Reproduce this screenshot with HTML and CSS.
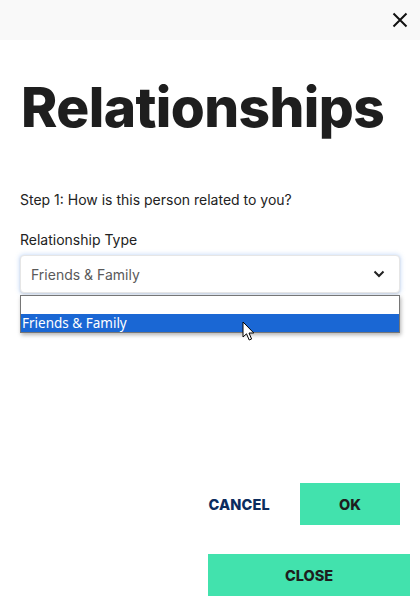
FILE: index.html
```html
<!DOCTYPE html>
<html>
<head>
<meta charset="utf-8">
<link rel="stylesheet" href="styles.css">
</head>
<body>
<div class="page">
  <header class="topbar">
    <button class="close-x" aria-label="Close">
      <svg width="16" height="16" viewBox="0 0 16 16"><path d="M1.5 1.5 L14.5 14.5 M14.5 1.5 L1.5 14.5" stroke="#111" stroke-width="2" fill="none"/></svg>
    </button>
  </header>
  <main class="content">
    <h1 class="title">Relationships</h1>
    <p class="step">Step 1: How is this person related to you?</p>
    <label class="label">Relationship Type</label>
    <div class="select-wrap">
      <div class="select">
        <span class="select-value">Friends &amp; Family</span>
        <svg class="chev" width="12" height="8" viewBox="0 0 12 8"><path d="M1.5 1.5 L6 6 L10.5 1.5" stroke="#222" stroke-width="2" fill="none"/></svg>
      </div>
      <div class="listbox">
        <div class="opt"></div>
        <div class="opt sel">Friends &amp; Family</div>
      </div>
      <svg class="cursor" width="14" height="21" viewBox="0 0 14 21"><path d="M1 1 L1 16 L4.5 12.8 L7.2 19 L9.6 18 L7 12 L11.8 12 Z" fill="#fff" stroke="#000" stroke-width="1"/></svg>
    </div>
  </main>
  <footer class="footer">
    <div class="actions">
      <button class="btn-text">CANCEL</button>
      <button class="btn-primary ok">OK</button>
    </div>
    <div class="close-row">
      <button class="btn-primary close">CLOSE</button>
    </div>
  </footer>
</div>
</body>
</html>
```
FILE: styles.css
```css
* { box-sizing: border-box; }
html, body { margin: 0; padding: 0; background: #fff; }
body { font-family: Inter, "Noto Sans", sans-serif; color: #1e1e1e; width: 420px; height: 606px; overflow: hidden; }
.page { display: flex; flex-direction: column; height: 606px; }
.topbar { height: 40px; background: #f9f9f9; display: flex; justify-content: flex-end; align-items: center; padding-right: 12px; }
.close-x { border: 0; background: transparent; padding: 0; width: 16px; height: 16px; display: flex; }
.content { padding: 0 20px; }
.title { font-size: 55px; line-height: 66px; font-weight: 800; margin: 34px 0 0 1px; letter-spacing: -0.6px; color: #1e1e1e; }
.step { font-size: 14px; line-height: 20px; margin: 50px 0 0; color: #222; }
.label { display: block; font-size: 14px; line-height: 20px; margin-top: 20px; color: #222; }
.select-wrap { position: relative; margin-top: 5px; }
.select { height: 38px; border: 1px solid #e6e6e6; border-radius: 4px; background: #fff; display: flex; align-items: center; justify-content: space-between; padding: 0 14px 0 10px; box-shadow: 0 0 4px 1px rgba(120,170,240,0.35), 0 1px 2px rgba(0,0,0,0.12); }
.select-value { font-size: 14px; color: #5a5a5a; }
.chev { display: block; margin-top: -1px; }
.listbox { position: absolute; left: 0; top: 40px; width: 380px; border: 1px solid #767676; background: #fff; box-shadow: 1px 2px 4px rgba(0,0,0,0.3); }
.opt { height: 18px; font-family: "Noto Sans", "Open Sans", sans-serif; font-size: 13.5px; line-height: 18px; padding-left: 1px; color: #000; }
.opt.sel { background: #1a67d4; color: #fff; }
.cursor { position: absolute; left: 222px; top: 66px; }
.footer { margin-top: auto; padding-bottom: 10px; }
.actions { display: flex; justify-content: flex-end; align-items: center; gap: 30px; padding-right: 20px; }
.btn-text { border: 0; background: transparent; font-family: Inter, sans-serif; font-weight: 800; font-size: 14.5px; color: #0c2c5e; padding: 0; letter-spacing: 0.2px; }
.btn-primary { border: 0; background: #42e2ad; font-family: Inter, sans-serif; font-weight: 800; font-size: 14.5px; color: #1e1e1e; height: 42px; }
.ok { width: 100px; }
.close-row { display: flex; justify-content: flex-end; padding-right: 10px; margin-top: 29px; }
.close { width: 202px; }
```
